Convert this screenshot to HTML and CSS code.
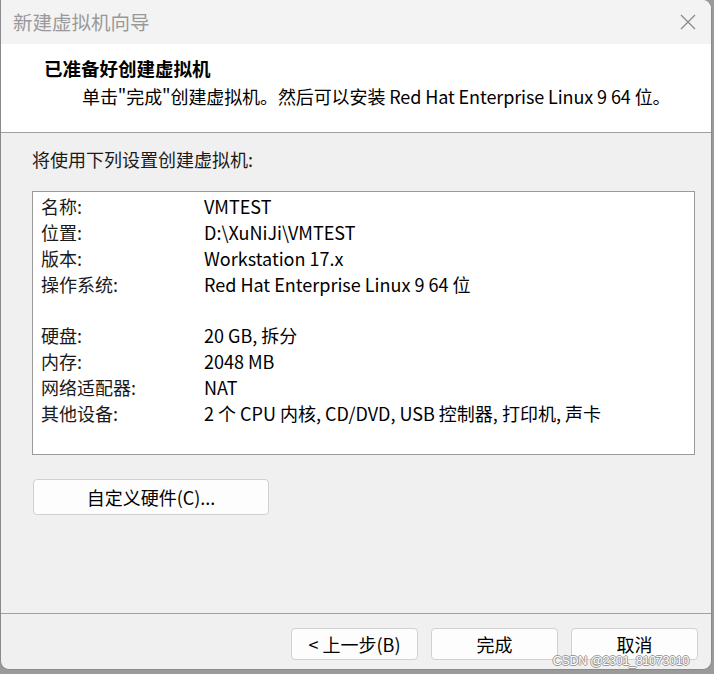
FILE: index.html
```html
<!DOCTYPE html>
<html lang="zh-CN">
<head>
<meta charset="utf-8">
<title>新建虚拟机向导</title>
<link rel="stylesheet" href="styles.css">
</head>
<body>
<div class="window">
  <div class="titlebar">
    <span class="title">新建虚拟机向导</span>
    <svg class="close" width="16" height="16" viewBox="0 0 16 16"><path d="M1 1 L15 15 M15 1 L1 15" stroke="#8a8a8a" stroke-width="1.3" fill="none"/></svg>
  </div>
  <div class="header">
    <div class="h-title">已准备好创建虚拟机</div>
    <div class="h-sub">单击"完成"创建虚拟机。然后可以安装 Red Hat Enterprise Linux 9 64 位。</div>
  </div>
  <div class="content">
    <div class="intro">将使用下列设置创建虚拟机:</div>
    <div class="list">
      <div class="row"><span class="k">名称:</span><span class="v">VMTEST</span></div>
      <div class="row"><span class="k">位置:</span><span class="v">D:\XuNiJi\VMTEST</span></div>
      <div class="row"><span class="k">版本:</span><span class="v">Workstation 17.x</span></div>
      <div class="row"><span class="k">操作系统:</span><span class="v">Red Hat Enterprise Linux 9 64 位</span></div>
      <div class="row"></div>
      <div class="row"><span class="k">硬盘:</span><span class="v">20 GB, 拆分</span></div>
      <div class="row"><span class="k">内存:</span><span class="v">2048 MB</span></div>
      <div class="row"><span class="k">网络适配器:</span><span class="v">NAT</span></div>
      <div class="row"><span class="k">其他设备:</span><span class="v">2 个 CPU 内核, CD/DVD, USB 控制器, 打印机, 声卡</span></div>
    </div>
    <button class="btn custom">自定义硬件(C)...</button>
  </div>
  <div class="footer">
    <button class="btn">&lt; 上一步(B)</button>
    <button class="btn">完成</button>
    <button class="btn">取消</button>
  </div>
  <div class="watermark">CSDN @2301_81073010</div>
</div>
</body>
</html>
```
FILE: styles.css
```css
html, body {
  margin: 0;
  padding: 0;
  background: #9a9a9a;
  width: 714px;
  height: 674px;
  overflow: hidden;
}
body {
  font-family: "Noto Sans CJK SC", "Noto Sans", sans-serif;
  font-size: 18px;
  color: #000;
}
.window {
  position: relative;
  width: 710px;
  height: 669px;
  background: #f0f0f0;
  border: 1px solid #8a8a8a;
  border-top: none;
  border-radius: 0 9px 9px 9px;
  overflow: hidden;
  display: flex;
  flex-direction: column;
}
.titlebar {
  height: 44px;
  flex: 0 0 44px;
  background: #f3f3f3;
  display: flex;
  align-items: center;
  justify-content: space-between;
  padding: 0 15px 0 12px;
}
.title {
  font-size: 19.5px;
  color: #999;
  line-height: 24px;
}
.close { display: block; margin-top: -1px; }
.header {
  background: #fff;
  height: 89px;
  flex: 0 0 89px;
  border-bottom: 1px solid #a0a0a0;
  box-sizing: border-box;
  padding: 12px 0 0 43px;
}
.h-title {
  font-weight: bold;
  font-size: 18.5px;
  line-height: 24px;
}
.h-sub {
  padding-left: 38px;
  margin-top: 4px;
  line-height: 24px;
  color: #000;
  letter-spacing: -0.1px;
}
.content {
  flex: 1;
  padding: 13px 0 0 31px;
  border-bottom: 1px solid #a0a0a0;
}
.intro {
  line-height: 26px;
  color: #1a1a1a;
}
.list {
  margin-top: 19px;
  width: 661px;
  height: 260px;
  background: #fff;
  border: 1px solid #9a9a9a;
  padding-top: 2px;
  box-sizing: content-box;
}
.row {
  display: grid;
  grid-template-columns: 163px 1fr;
  height: 25.9px;
  line-height: 25.9px;
  padding-left: 8px;
  white-space: nowrap;
}
.k { color: #1a1a1a; }
.btn {
  font-family: "Noto Sans CJK SC", "Noto Sans", sans-serif;
  font-size: 18px;
  line-height: 24px;
  color: #000;
  background: #fdfdfd;
  border: 1px solid #d0d0d0;
  border-radius: 4px;
  padding: 0;
  box-sizing: border-box;
}
.custom {
  display: block;
  margin-top: 24px;
  margin-left: 1px;
  width: 236px;
  height: 36px;
}
.footer {
  flex: 0 0 55px;
  display: flex;
  justify-content: flex-end;
  align-items: flex-start;
  gap: 13px;
  padding: 14px 13px 0 0;
  box-sizing: border-box;
}
.footer .btn {
  width: 127px;
  height: 32px;
}
.watermark {
  position: absolute;
  right: 22px;
  bottom: 1px;
  font-family: "Liberation Sans", sans-serif;
  font-size: 12.5px;
  color: #fff;
  text-shadow: -1px 0 #9a9a9a, 1px 0 #9a9a9a, 0 -1px #9a9a9a, 0 1px #9a9a9a;
  letter-spacing: -0.3px;
}
```
